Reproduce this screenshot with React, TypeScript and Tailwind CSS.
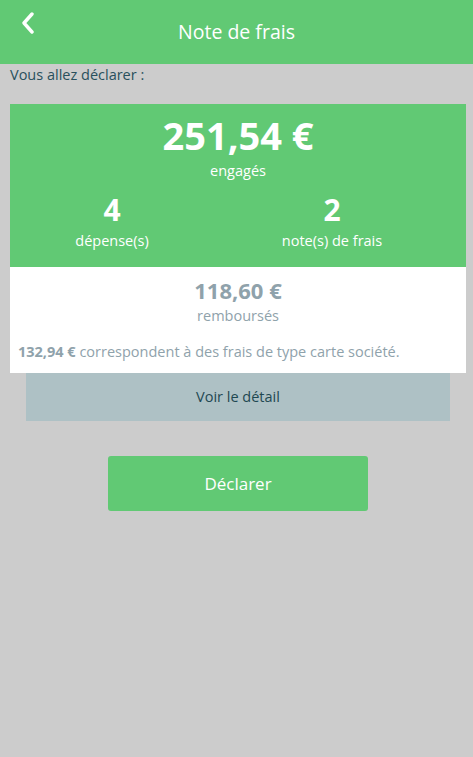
import React from "react";

const App: React.FC = () => {
  return (
    <div
      className="min-h-[757px] w-full bg-[#cccccc]"
      style={{ fontFamily: '"Open Sans", "Liberation Sans", sans-serif' }}
    >
      {/* Header */}
      <header className="relative flex h-16 items-center justify-center bg-[#61c974]">
        <button className="absolute left-[18px] top-[10px] p-0.5">
          <svg width="16" height="22" viewBox="0 0 16 22" fill="none">
            <path
              d="M12 2 L4 11 L12 20"
              stroke="white"
              strokeWidth="3.4"
              strokeLinecap="round"
              strokeLinejoin="round"
            />
          </svg>
        </button>
        <h1 className="text-[19.5px] text-white">Note de frais</h1>
      </header>

      <p className="px-[10px] text-[14.5px] leading-[22px] text-[#29505c]">
        Vous allez déclarer :
      </p>

      {/* Summary card */}
      <div className="mx-[10px] mt-[18px] w-[456px]">
        <div className="flex h-[163px] flex-col items-center bg-[#61c974] pt-[8px] text-white">
          <div className="text-[38px] font-bold leading-[46px]">251,54 €</div>
          <div className="mt-[3px] text-[14.5px] leading-[20px]">engagés</div>
          <div className="mt-[11px] grid w-full grid-cols-[204px_236px]">
            <div className="flex flex-col items-center">
              <span className="text-[30px] font-bold leading-[36px]">4</span>
              <span className="mt-[3px] text-[14.5px] leading-[20px]">dépense(s)</span>
            </div>
            <div className="flex flex-col items-center">
              <span className="text-[30px] font-bold leading-[36px]">2</span>
              <span className="mt-[3px] text-[14.5px] leading-[20px]">note(s) de frais</span>
            </div>
          </div>
        </div>
        <div className="flex h-[106px] flex-col bg-white pt-[8px] text-[#8fa2ab]">
          <div className="text-center text-[22px] font-bold leading-[30px]">118,60 €</div>
          <div className="mt-[1px] text-center text-[14.5px] leading-[20px]">remboursés</div>
          <p className="mt-[16px] pl-[8px] text-[14.5px] leading-[20px]">
            <span className="font-bold">132,94 €</span> correspondent à des frais de type carte société.
          </p>
        </div>
      </div>

      <button className="mx-[26px] flex h-[48px] w-[424px] items-center justify-center bg-[#aec1c5] text-[14.5px] text-[#1f4852]">
        Voir le détail
      </button>

      <div className="mt-[35px] flex pl-[108px]">
        <button className="h-[55px] w-[260px] rounded-[3px] bg-[#61c974] text-[17px] text-white">
          Déclarer
        </button>
      </div>
    </div>
  );
};

export default App;
